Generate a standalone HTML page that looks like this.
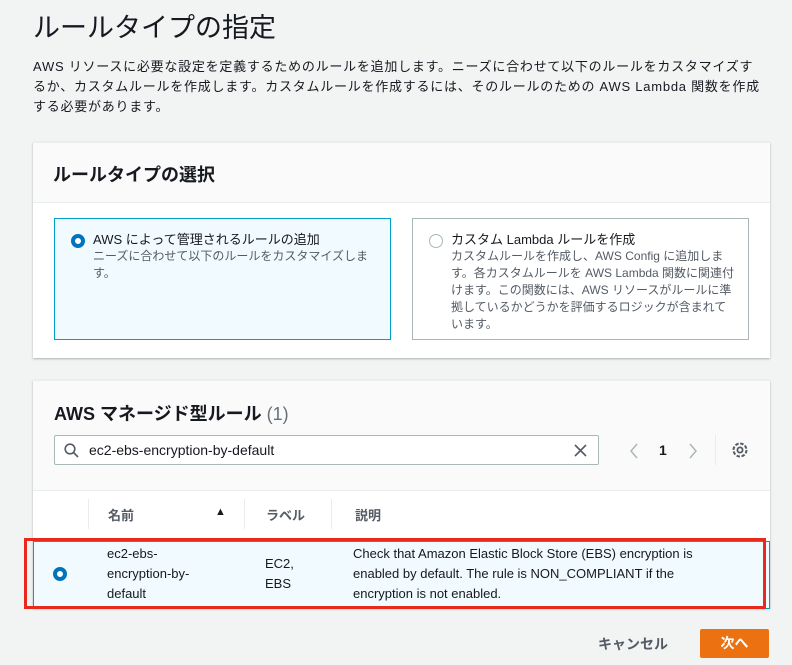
<!DOCTYPE html>
<html><head><meta charset="utf-8"><style>
*{box-sizing:border-box;margin:0;padding:0}
body{width:792px;height:665px;background:#f2f3f3;font-family:"Liberation Sans","Noto Sans CJK JP",sans-serif;color:#16191f;position:relative;overflow:hidden}
.a{position:absolute}
h1{position:absolute;left:33px;top:6px;font-size:27px;font-weight:normal;color:#16191f}
.desc{left:33px;top:57px;width:780px;font-size:13px;line-height:20px;color:#16191f;letter-spacing:.75px;white-space:nowrap}
.panel{background:#fff;box-shadow:0 1px 2px rgba(0,28,36,.3);border-top:1px solid #eaeded}
.hd{background:#fafafa;border-bottom:1px solid #eaeded}
.opt{border:1px solid #aab7b8;background:#fff;padding:12px 4px 0 38px;font-size:13px;line-height:17px}
.opt .s{color:#545b64;font-size:12px;white-space:nowrap}
.radio{position:absolute;left:16px;top:15px;width:14px;height:14px;border-radius:50%;border:1.5px solid #aab7b8;background:#fff}
.radio.on{border:4px solid #0073bb}
</style></head><body>
<h1>ルールタイプの指定</h1>
<div class="a desc">AWS リソースに必要な設定を定義するためのルールを追加します。ニーズに合わせて以下のルールをカスタマイズす<br>るか、カスタムルールを作成します。カスタムルールを作成するには、そのルールのための AWS Lambda 関数を作成<br>する必要があります。</div>

<div class="a panel" style="left:33px;top:142px;width:737px;height:216px">
 <div class="hd" style="height:60px;padding:18px 20px;font-size:18px;font-weight:bold">ルールタイプの選択</div>
 <div class="a opt" style="left:21px;top:75px;width:337px;height:122px;background:#f1faff;border-color:#00a1c9">
  <div class="radio on"></div>AWS によって管理されるルールの追加<div class="s">ニーズに合わせて以下のルールをカスタマイズしま<br>す。</div></div>
 <div class="a opt" style="left:379px;top:75px;width:337px;height:122px">
  <div class="radio"></div>カスタム Lambda ルールを作成<div class="s">カスタムルールを作成し、AWS Config に追加しま<br>す。各カスタムルールを AWS Lambda 関数に関連付<br>けます。この関数には、AWS リソースがルールに準<br>拠しているかどうかを評価するロジックが含まれて<br>います。</div></div>
</div>

<div class="a panel" style="left:33px;top:380px;width:737px;height:228px;background:#fafafa">
 <div class="a" style="left:21px;top:19px;font-size:18px;font-weight:bold">AWS マネージド型ルール <span style="font-weight:normal;color:#687078">(1)</span></div>
 <div class="a" style="left:21px;top:54px;width:545px;height:30px;border:1px solid #aab7b8;background:#fff;border-radius:2px;font-size:14px;line-height:28px;padding-left:34px">ec2-ebs-encryption-by-default
  <svg class="a" style="left:9px;top:7px" width="15" height="15" viewBox="0 0 15 15"><circle cx="6" cy="6" r="4.8" fill="none" stroke="#545b64" stroke-width="1.6"/><path d="M9.5 9.5L14 14" stroke="#545b64" stroke-width="1.6"/></svg>
  <svg class="a" style="left:519px;top:8px" width="13" height="13" viewBox="0 0 13 13"><path d="M1 1L12 12M12 1L1 12" stroke="#545b64" stroke-width="1.6"/></svg></div>
 <svg class="a" style="left:596px;top:62px" width="10" height="16"><path d="M8 1L2 8L8 15" fill="none" stroke="#aab7b8" stroke-width="1.5"/></svg>
 <div class="a" style="left:626px;top:61px;font-size:14px;font-weight:bold">1</div>
 <svg class="a" style="left:655px;top:62px" width="10" height="16"><path d="M2 1L8 8L2 15" fill="none" stroke="#aab7b8" stroke-width="1.5"/></svg>
 <div class="a" style="left:682px;top:54px;width:1px;height:30px;background:#eaeded"></div>
 <svg class="a" style="left:698px;top:60px" width="18" height="18" viewBox="0 0 18 18"><circle cx="9" cy="9" r="6.5" fill="none" stroke="#545b64" stroke-width="2" stroke-dasharray="3.5 1.6"/><circle cx="9" cy="9" r="2.6" fill="none" stroke="#545b64" stroke-width="1.8"/></svg>
 <div class="a" style="left:0;top:109px;width:737px;height:119px;background:#fff;border-top:1px solid #eaeded"></div>
 <div class="a" style="left:55px;top:118px;width:1px;height:30px;background:#eaeded"></div>
 <div class="a" style="left:211px;top:118px;width:1px;height:30px;background:#eaeded"></div>
 <div class="a" style="left:298px;top:118px;width:1px;height:30px;background:#eaeded"></div>
 <div class="a" style="left:75px;top:124px;font-size:13px;font-weight:bold;color:#545b64">名前</div>
 <div class="a" style="left:182px;top:125px;font-size:11px;color:#16191f">▲</div>
 <div class="a" style="left:233px;top:124px;font-size:13px;font-weight:bold;color:#545b64">ラベル</div>
 <div class="a" style="left:322px;top:124px;font-size:13px;font-weight:bold;color:#545b64">説明</div>
 <div class="a" style="left:0;top:160px;width:737px;height:68px;background:#f1faff;border:1px solid #00a1c9"></div>
 <div class="a" style="left:20px;top:186px;width:14px;height:14px;border-radius:50%;border:4px solid #0073bb;background:#fff"></div>
 <div class="a" style="left:74px;top:163px;font-size:13px;line-height:20px;width:110px">ec2-ebs-<br>encryption-by-<br>default</div>
 <div class="a" style="left:232px;top:173px;font-size:13px;line-height:20px">EC2,<br>EBS</div>
 <div class="a" style="left:320px;top:163px;font-size:13px;line-height:20px;width:380px">Check that Amazon Elastic Block Store (EBS) encryption is enabled by default. The rule is NON_COMPLIANT if the encryption is not enabled.</div>
</div>
<div class="a" style="left:24px;top:538px;width:742px;height:71px;border:3px solid #e8291c"></div>

<div class="a" style="left:598px;top:634px;font-size:14px;font-weight:bold;color:#545b64">キャンセル</div>
<div class="a" style="left:700px;top:629px;width:69px;height:29px;background:#ec7211;color:#fff;font-size:14px;font-weight:bold;text-align:center;line-height:29px;border-radius:2px">次へ</div>
</body></html>
